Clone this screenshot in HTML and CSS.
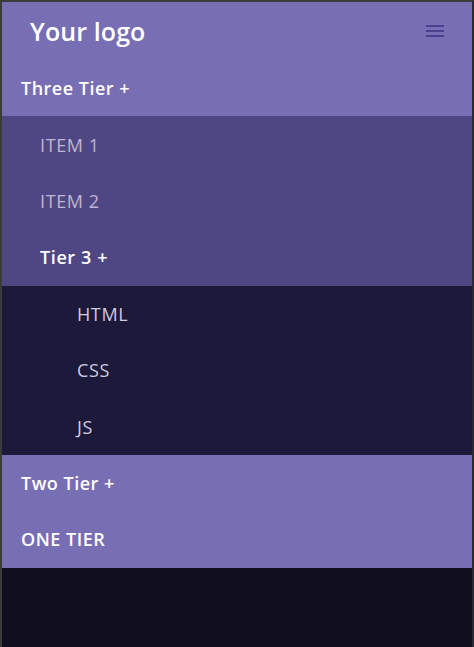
FILE: index.html
```html
<!DOCTYPE html>
<html>
<head>
<meta charset="utf-8">
<link rel="stylesheet" href="styles.css">
</head>
<body>
<div class="frame">
  <nav class="nav">
    <header class="header">
      <span class="logo">Your logo</span>
      <svg class="burger" width="18" height="12" viewBox="0 0 18 12"><path d="M0 1h18M0 6h18M0 11h18" stroke="#4b3f8e" stroke-width="2"/></svg>
    </header>
    <ul class="menu">
      <li class="item l1">Three Tier +</li>
      <li class="sub">
        <ul class="menu">
          <li class="item l2 muted">ITEM 1</li>
          <li class="item l2 muted">ITEM 2</li>
          <li class="item l2 strong">Tier 3 +</li>
          <li class="sub2">
            <ul class="menu">
              <li class="item l3">HTML</li>
              <li class="item l3">CSS</li>
              <li class="item l3">JS</li>
            </ul>
          </li>
        </ul>
      </li>
      <li class="item l1">Two Tier +</li>
      <li class="item l1">ONE TIER</li>
    </ul>
  </nav>
</div>
</body>
</html>
```
FILE: styles.css
```css
html, body { margin: 0; padding: 0; }
body { background: #3b3b3b; font-family: "Open Sans", "Noto Sans", sans-serif; }
.frame {
  box-sizing: border-box;
  width: 474px;
  height: 647px;
  border-top: 2px solid #3b3b3b;
  border-left: 2px solid #3b3b3b;
  border-right: 2px solid #2a2a30;
  background: #110f1e;
}
.nav { background: #786eb4; }
.header {
  height: 58px;
  display: flex;
  align-items: center;
  justify-content: space-between;
  padding: 0 28px 0 28px;
}
.logo { color: #fff; font-size: 25px; font-weight: 600; letter-spacing: 0.1px; margin-top: -1px; }
.burger { display: block; margin-top: 0; }
.menu { list-style: none; margin: 0; padding: 0; }
.item {
  height: 56.4px;
  display: flex;
  align-items: center;
  font-size: 18px;
  font-weight: 600;
  letter-spacing: 0.5px;
  color: #fff;
}
.l1 { padding-left: 19px; }
.l2 { padding-left: 38px; font-weight: 500; letter-spacing: 0.6px; }
.l3 { padding-left: 75px; font-weight: 500; letter-spacing: 0.6px; color: #cfcbe0; }
.strong { font-weight: 600; }
.muted { color: #bdb7d3; }
.sub { background: #4f4784; }
.sub2 { background: #1c193b; }
```
